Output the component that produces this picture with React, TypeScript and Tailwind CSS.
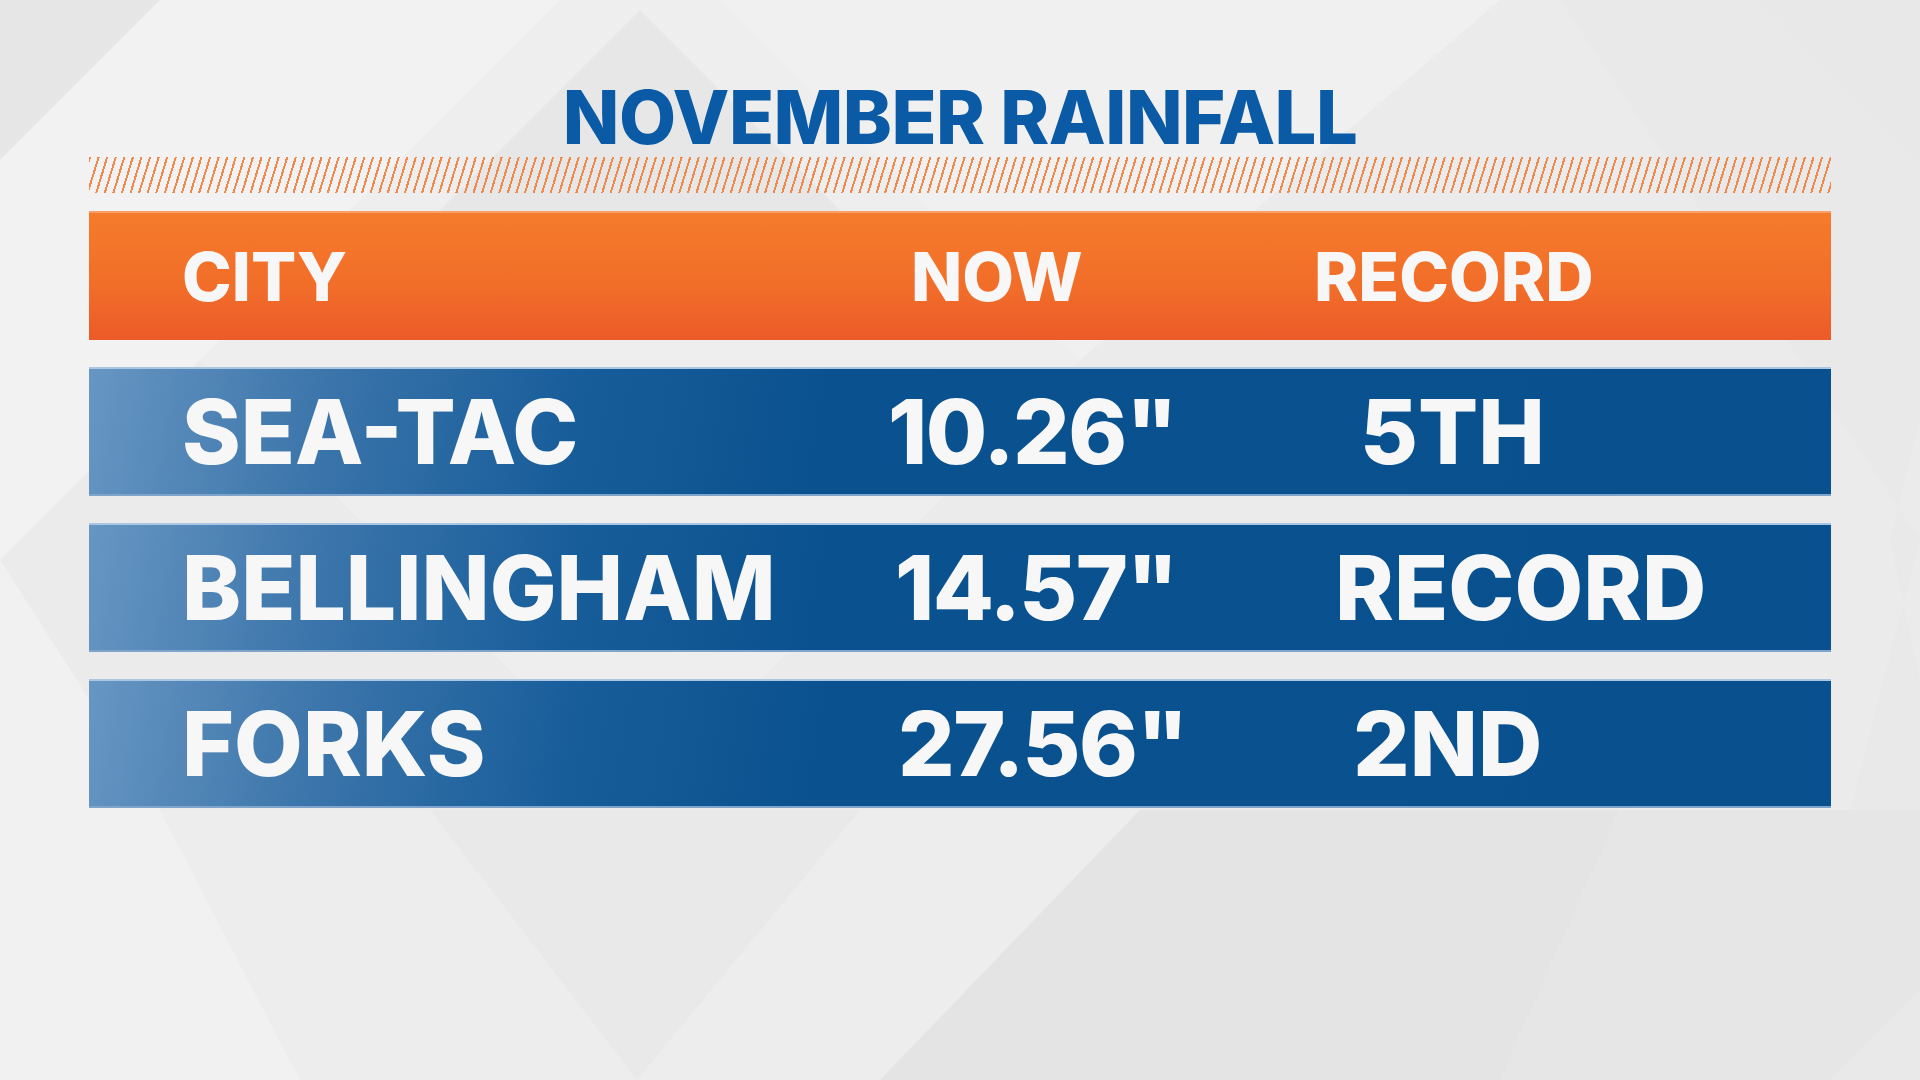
const rows = [
  { city: "SEA-TAC", now: '10.26"', nowPad: "pl-0", record: "5TH", recPad: "pl-[46px]" },
  { city: "BELLINGHAM", now: '14.57"', nowPad: "pl-[7px]", record: "RECORD", recPad: "pl-[21px]" },
  { city: "FORKS", now: '27.56"', nowPad: "pl-[10px]", record: "2ND", recPad: "pl-[39px]" },
];

function Backdrop() {
  // soft diagonal facets behind the graphic
  return (
    <svg
      viewBox="0 0 1920 1080"
      preserveAspectRatio="none"
      className="absolute inset-0 h-full w-full"
    >
      <rect width="1920" height="1080" fill="#ebebeb" />
      <polygon points="0,0 160,0 0,160" fill="#e6e6e6" />
      <polygon points="160,0 560,0 0,560 0,160" fill="#f2f2f2" />
      <polygon points="560,0 720,0 1080,360 640,800 200,360" fill="#eeeeee" />
      <polygon points="640,10 900,270 380,270" fill="#e7e7e7" />
      <polygon points="720,0 1500,0 1080,360" fill="#f0f0f0" />
      <polygon points="1500,0 1920,0 1920,160 1760,0" fill="#e8e8e8" />
      <polygon points="1760,0 1920,160 1920,420 1890,540 1920,680 1920,1080 1780,1080 1920,540 1560,0" fill="#e9e9e9" />
      <polygon points="0,560 160,810 300,1080 0,1080" fill="#f1f1f1" />
      <polygon points="160,810 430,810 637,1080 300,1080" fill="#ededed" />
      <polygon points="430,810 860,810 637,1080" fill="#e9e9e9" />
      <polygon points="860,810 1140,810 880,1080 637,1080" fill="#ededed" />
      <polygon points="1140,810 1620,810 1500,1080 880,1080" fill="#e4e4e4" />
      <polygon points="1620,810 1920,810 1920,990 1830,1080 1500,1080" fill="#e6e6e6" />
    </svg>
  );
}

export default function App() {
  return (
    <div className="relative h-[1080px] w-[1920px] overflow-hidden font-['Inter',sans-serif]">
      <Backdrop />

      <div className="relative flex flex-col px-[89px] pt-[80px]">
        <h1 className="text-center text-[74px] leading-none font-extrabold tracking-[-0.5px] text-[#0b5aa6]">
          NOVEMBER RAINFALL
        </h1>

        <div className="mt-[3px] h-[36px] bg-[repeating-linear-gradient(107deg,#ef8a4c_0px,#ef8a4c_2px,transparent_2px,transparent_8.2px)]" />

        <div className="mt-[18px] grid h-[129px] grid-cols-[799px_426px_1fr] items-center border-t-2 border-[#f9a06a] bg-[linear-gradient(180deg,#f57b2b_0%,#f16d29_60%,#ec5a29_100%)] text-[67px] leading-none font-extrabold text-[#f7f7f7]">
          <div className="pl-[93px]">CITY</div>
          <div className="pl-[23px]">NOW</div>
          <div className="pl-0">RECORD</div>
        </div>

        <div className="mt-[27px] flex flex-col gap-[27px]">
          {rows.map((row) => (
            <div
              key={row.city}
              className="grid h-[129px] grid-cols-[799px_426px_1fr] items-center border-t-2 border-b-2 border-t-[#a9c7e4] border-b-[#7ea4cc] bg-[linear-gradient(100deg,#6796c2_0%,#3a74aa_14%,#175d9a_28%,#0a528f_42%,#09518e_100%)] text-[89px] leading-none font-extrabold text-[#f7f7f7]"
            >
              <div className="pl-[93px]">{row.city}</div>
              <div className={`${row.nowPad} tracking-[-1.5px]`}>{row.now}</div>
              <div className={row.recPad}>{row.record}</div>
            </div>
          ))}
        </div>
      </div>
    </div>
  );
}
